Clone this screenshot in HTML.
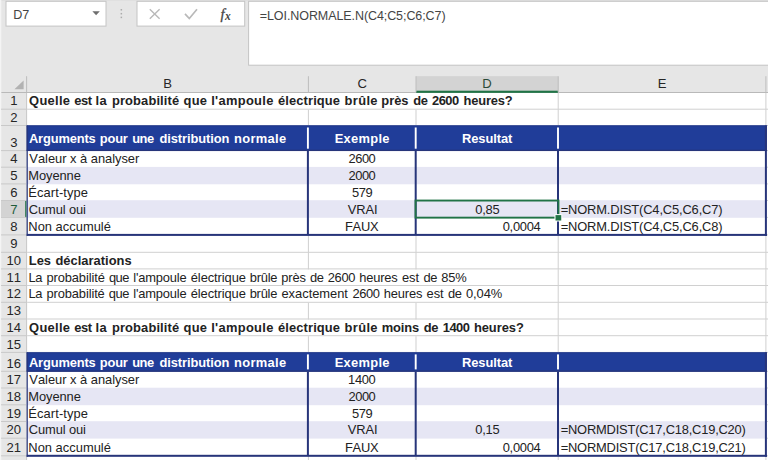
<!DOCTYPE html>
<html><head><meta charset="utf-8"><title>Excel</title>
<style>
html,body{margin:0;padding:0;}
body{font-kerning:none;width:768px;height:460px;position:relative;overflow:hidden;background:#fff;font-family:"Liberation Sans",sans-serif;color:#222;}
svg{position:absolute;left:0;top:0;}
.abs{position:absolute;white-space:nowrap;}
.t{position:absolute;white-space:nowrap;font-size:12.9px;line-height:17px;height:17px;}
.b{font-weight:bold;}
.w{color:#fff;font-weight:bold;}
.rh{position:absolute;left:1px;width:25.6px;text-align:center;font-size:13.1px;color:#262626;line-height:17px;}
.ch{position:absolute;top:76.3px;height:16px;line-height:16px;text-align:center;font-size:13.1px;color:#262626;}
</style></head><body>
<svg width="768" height="460" viewBox="0 0 768 460">
<rect x="0.00" y="0.00" width="768.00" height="92.50" fill="#e6e6e6"/>
<rect x="0.00" y="0.00" width="768.00" height="1.00" fill="#e0e0e0"/>
<rect x="6.00" y="1.30" width="100.00" height="24.80" fill="#fff" stroke="#c4c4c4" stroke-width="1"/>
<path d="M92.4 11.2H99.8L96.1 15.2Z" fill="#6e6e6e"/>
<rect x="120.60" y="9.05" width="1.50" height="1.50" fill="#ababab"/>
<rect x="120.60" y="12.95" width="1.50" height="1.50" fill="#ababab"/>
<rect x="120.60" y="16.65" width="1.50" height="1.50" fill="#ababab"/>
<rect x="137.00" y="1.30" width="107.70" height="24.80" fill="#fff" stroke="#c4c4c4" stroke-width="1"/>
<path d="M149.8 9.2L159.6 18.8M159.6 9.2L149.8 18.8" stroke="#b9b9b9" stroke-width="1.4" fill="none"/>
<path d="M185 13.9L189.3 18.5L197 9.3" stroke="#b9b9b9" stroke-width="1.7" fill="none"/>
<rect x="248.60" y="1.30" width="530.00" height="63.90" fill="#fff" stroke="#c4c4c4" stroke-width="1"/>
<rect x="416.00" y="76.20" width="142.20" height="16.00" fill="#d3d3d3"/>
<rect x="416.00" y="90.70" width="142.20" height="2.20" fill="#217346"/>
<rect x="0.00" y="92.00" width="416.00" height="1.00" fill="#b9b9b9"/>
<rect x="558.20" y="92.00" width="209.80" height="1.00" fill="#b9b9b9"/>
<rect x="26.10" y="76.20" width="1.00" height="16.30" fill="#bdbdbd"/>
<rect x="307.90" y="76.20" width="1.00" height="16.30" fill="#bdbdbd"/>
<rect x="415.50" y="76.20" width="1.00" height="16.30" fill="#bdbdbd"/>
<rect x="557.70" y="76.20" width="1.00" height="16.30" fill="#bdbdbd"/>
<rect x="765.40" y="76.20" width="1.00" height="16.30" fill="#bdbdbd"/>
<path d="M23.6 80.6V89.2H14.4Z" fill="#b2b2b2"/>
<rect x="0.00" y="93.00" width="768.00" height="368.00" fill="#fff"/>
<rect x="0.00" y="93.00" width="26.10" height="368.00" fill="#e6e6e6"/>
<rect x="0.00" y="0.00" width="1.30" height="460.00" fill="#f4f4f4"/>
<rect x="26.10" y="93.00" width="1.00" height="367.00" fill="#c6c6c6"/>
<rect x="1.00" y="201.00" width="25.60" height="15.90" fill="#d3d3d3"/>
<rect x="25.20" y="200.50" width="2.00" height="16.90" fill="#217346"/>
<rect x="1.00" y="108.70" width="25.10" height="1.00" fill="#c9c9c9"/>
<rect x="1.00" y="125.00" width="25.10" height="1.00" fill="#c9c9c9"/>
<rect x="1.00" y="150.10" width="25.10" height="1.00" fill="#c9c9c9"/>
<rect x="1.00" y="166.70" width="25.10" height="1.00" fill="#c9c9c9"/>
<rect x="1.00" y="183.40" width="25.10" height="1.00" fill="#c9c9c9"/>
<rect x="1.00" y="200.00" width="25.10" height="1.00" fill="#c9c9c9"/>
<rect x="1.00" y="216.90" width="25.10" height="1.00" fill="#c9c9c9"/>
<rect x="1.00" y="234.40" width="25.10" height="1.00" fill="#c9c9c9"/>
<rect x="1.00" y="251.80" width="25.10" height="1.00" fill="#c9c9c9"/>
<rect x="1.00" y="268.40" width="25.10" height="1.00" fill="#c9c9c9"/>
<rect x="1.00" y="285.00" width="25.10" height="1.00" fill="#c9c9c9"/>
<rect x="1.00" y="301.80" width="25.10" height="1.00" fill="#c9c9c9"/>
<rect x="1.00" y="318.50" width="25.10" height="1.00" fill="#c9c9c9"/>
<rect x="1.00" y="335.20" width="25.10" height="1.00" fill="#c9c9c9"/>
<rect x="1.00" y="351.90" width="25.10" height="1.00" fill="#c9c9c9"/>
<rect x="1.00" y="370.80" width="25.10" height="1.00" fill="#c9c9c9"/>
<rect x="1.00" y="387.50" width="25.10" height="1.00" fill="#c9c9c9"/>
<rect x="1.00" y="404.30" width="25.10" height="1.00" fill="#c9c9c9"/>
<rect x="1.00" y="421.00" width="25.10" height="1.00" fill="#c9c9c9"/>
<rect x="1.00" y="437.70" width="25.10" height="1.00" fill="#c9c9c9"/>
<rect x="1.00" y="455.30" width="25.10" height="1.00" fill="#c9c9c9"/>
<rect x="27.10" y="108.70" width="740.90" height="1.00" fill="#d0d0d0"/>
<rect x="557.70" y="93.00" width="1.00" height="16.70" fill="#d0d0d0"/>
<rect x="765.40" y="93.00" width="1.00" height="16.70" fill="#d0d0d0"/>
<rect x="27.10" y="125.00" width="740.90" height="1.00" fill="#d0d0d0"/>
<rect x="307.90" y="109.70" width="1.00" height="16.30" fill="#d0d0d0"/>
<rect x="415.50" y="109.70" width="1.00" height="16.30" fill="#d0d0d0"/>
<rect x="557.70" y="109.70" width="1.00" height="16.30" fill="#d0d0d0"/>
<rect x="765.40" y="109.70" width="1.00" height="16.30" fill="#d0d0d0"/>
<rect x="27.10" y="150.10" width="740.90" height="1.00" fill="#d0d0d0"/>
<rect x="307.90" y="126.00" width="1.00" height="25.10" fill="#d0d0d0"/>
<rect x="415.50" y="126.00" width="1.00" height="25.10" fill="#d0d0d0"/>
<rect x="557.70" y="126.00" width="1.00" height="25.10" fill="#d0d0d0"/>
<rect x="765.40" y="126.00" width="1.00" height="25.10" fill="#d0d0d0"/>
<rect x="27.10" y="166.70" width="740.90" height="1.00" fill="#d0d0d0"/>
<rect x="307.90" y="151.10" width="1.00" height="16.60" fill="#d0d0d0"/>
<rect x="415.50" y="151.10" width="1.00" height="16.60" fill="#d0d0d0"/>
<rect x="557.70" y="151.10" width="1.00" height="16.60" fill="#d0d0d0"/>
<rect x="765.40" y="151.10" width="1.00" height="16.60" fill="#d0d0d0"/>
<rect x="27.10" y="183.40" width="740.90" height="1.00" fill="#d0d0d0"/>
<rect x="307.90" y="167.70" width="1.00" height="16.70" fill="#d0d0d0"/>
<rect x="415.50" y="167.70" width="1.00" height="16.70" fill="#d0d0d0"/>
<rect x="557.70" y="167.70" width="1.00" height="16.70" fill="#d0d0d0"/>
<rect x="765.40" y="167.70" width="1.00" height="16.70" fill="#d0d0d0"/>
<rect x="27.10" y="200.00" width="740.90" height="1.00" fill="#d0d0d0"/>
<rect x="307.90" y="184.40" width="1.00" height="16.60" fill="#d0d0d0"/>
<rect x="415.50" y="184.40" width="1.00" height="16.60" fill="#d0d0d0"/>
<rect x="557.70" y="184.40" width="1.00" height="16.60" fill="#d0d0d0"/>
<rect x="765.40" y="184.40" width="1.00" height="16.60" fill="#d0d0d0"/>
<rect x="27.10" y="216.90" width="740.90" height="1.00" fill="#d0d0d0"/>
<rect x="307.90" y="201.00" width="1.00" height="16.90" fill="#d0d0d0"/>
<rect x="415.50" y="201.00" width="1.00" height="16.90" fill="#d0d0d0"/>
<rect x="557.70" y="201.00" width="1.00" height="16.90" fill="#d0d0d0"/>
<rect x="765.40" y="201.00" width="1.00" height="16.90" fill="#d0d0d0"/>
<rect x="27.10" y="234.40" width="740.90" height="1.00" fill="#d0d0d0"/>
<rect x="307.90" y="217.90" width="1.00" height="17.50" fill="#d0d0d0"/>
<rect x="415.50" y="217.90" width="1.00" height="17.50" fill="#d0d0d0"/>
<rect x="557.70" y="217.90" width="1.00" height="17.50" fill="#d0d0d0"/>
<rect x="765.40" y="217.90" width="1.00" height="17.50" fill="#d0d0d0"/>
<rect x="27.10" y="251.80" width="740.90" height="1.00" fill="#d0d0d0"/>
<rect x="307.90" y="235.40" width="1.00" height="17.40" fill="#d0d0d0"/>
<rect x="415.50" y="235.40" width="1.00" height="17.40" fill="#d0d0d0"/>
<rect x="557.70" y="235.40" width="1.00" height="17.40" fill="#d0d0d0"/>
<rect x="765.40" y="235.40" width="1.00" height="17.40" fill="#d0d0d0"/>
<rect x="27.10" y="268.40" width="740.90" height="1.00" fill="#d0d0d0"/>
<rect x="307.90" y="252.80" width="1.00" height="16.60" fill="#d0d0d0"/>
<rect x="415.50" y="252.80" width="1.00" height="16.60" fill="#d0d0d0"/>
<rect x="557.70" y="252.80" width="1.00" height="16.60" fill="#d0d0d0"/>
<rect x="765.40" y="252.80" width="1.00" height="16.60" fill="#d0d0d0"/>
<rect x="27.10" y="285.00" width="740.90" height="1.00" fill="#d0d0d0"/>
<rect x="557.70" y="269.40" width="1.00" height="16.60" fill="#d0d0d0"/>
<rect x="765.40" y="269.40" width="1.00" height="16.60" fill="#d0d0d0"/>
<rect x="27.10" y="301.80" width="740.90" height="1.00" fill="#d0d0d0"/>
<rect x="557.70" y="286.00" width="1.00" height="16.80" fill="#d0d0d0"/>
<rect x="765.40" y="286.00" width="1.00" height="16.80" fill="#d0d0d0"/>
<rect x="27.10" y="318.50" width="740.90" height="1.00" fill="#d0d0d0"/>
<rect x="307.90" y="302.80" width="1.00" height="16.70" fill="#d0d0d0"/>
<rect x="415.50" y="302.80" width="1.00" height="16.70" fill="#d0d0d0"/>
<rect x="557.70" y="302.80" width="1.00" height="16.70" fill="#d0d0d0"/>
<rect x="765.40" y="302.80" width="1.00" height="16.70" fill="#d0d0d0"/>
<rect x="27.10" y="335.20" width="740.90" height="1.00" fill="#d0d0d0"/>
<rect x="557.70" y="319.50" width="1.00" height="16.70" fill="#d0d0d0"/>
<rect x="765.40" y="319.50" width="1.00" height="16.70" fill="#d0d0d0"/>
<rect x="27.10" y="351.90" width="740.90" height="1.00" fill="#d0d0d0"/>
<rect x="307.90" y="336.20" width="1.00" height="16.70" fill="#d0d0d0"/>
<rect x="415.50" y="336.20" width="1.00" height="16.70" fill="#d0d0d0"/>
<rect x="557.70" y="336.20" width="1.00" height="16.70" fill="#d0d0d0"/>
<rect x="765.40" y="336.20" width="1.00" height="16.70" fill="#d0d0d0"/>
<rect x="27.10" y="370.80" width="740.90" height="1.00" fill="#d0d0d0"/>
<rect x="307.90" y="352.90" width="1.00" height="18.90" fill="#d0d0d0"/>
<rect x="415.50" y="352.90" width="1.00" height="18.90" fill="#d0d0d0"/>
<rect x="557.70" y="352.90" width="1.00" height="18.90" fill="#d0d0d0"/>
<rect x="765.40" y="352.90" width="1.00" height="18.90" fill="#d0d0d0"/>
<rect x="27.10" y="387.50" width="740.90" height="1.00" fill="#d0d0d0"/>
<rect x="307.90" y="371.80" width="1.00" height="16.70" fill="#d0d0d0"/>
<rect x="415.50" y="371.80" width="1.00" height="16.70" fill="#d0d0d0"/>
<rect x="557.70" y="371.80" width="1.00" height="16.70" fill="#d0d0d0"/>
<rect x="765.40" y="371.80" width="1.00" height="16.70" fill="#d0d0d0"/>
<rect x="27.10" y="404.30" width="740.90" height="1.00" fill="#d0d0d0"/>
<rect x="307.90" y="388.50" width="1.00" height="16.80" fill="#d0d0d0"/>
<rect x="415.50" y="388.50" width="1.00" height="16.80" fill="#d0d0d0"/>
<rect x="557.70" y="388.50" width="1.00" height="16.80" fill="#d0d0d0"/>
<rect x="765.40" y="388.50" width="1.00" height="16.80" fill="#d0d0d0"/>
<rect x="27.10" y="421.00" width="740.90" height="1.00" fill="#d0d0d0"/>
<rect x="307.90" y="405.30" width="1.00" height="16.70" fill="#d0d0d0"/>
<rect x="415.50" y="405.30" width="1.00" height="16.70" fill="#d0d0d0"/>
<rect x="557.70" y="405.30" width="1.00" height="16.70" fill="#d0d0d0"/>
<rect x="765.40" y="405.30" width="1.00" height="16.70" fill="#d0d0d0"/>
<rect x="27.10" y="437.70" width="740.90" height="1.00" fill="#d0d0d0"/>
<rect x="307.90" y="422.00" width="1.00" height="16.70" fill="#d0d0d0"/>
<rect x="415.50" y="422.00" width="1.00" height="16.70" fill="#d0d0d0"/>
<rect x="557.70" y="422.00" width="1.00" height="16.70" fill="#d0d0d0"/>
<rect x="765.40" y="422.00" width="1.00" height="16.70" fill="#d0d0d0"/>
<rect x="27.10" y="455.30" width="740.90" height="1.00" fill="#d0d0d0"/>
<rect x="307.90" y="438.70" width="1.00" height="17.60" fill="#d0d0d0"/>
<rect x="415.50" y="438.70" width="1.00" height="17.60" fill="#d0d0d0"/>
<rect x="557.70" y="438.70" width="1.00" height="17.60" fill="#d0d0d0"/>
<rect x="765.40" y="438.70" width="1.00" height="17.60" fill="#d0d0d0"/>
<rect x="307.90" y="455.80" width="1.00" height="4.20" fill="#d0d0d0"/>
<rect x="415.50" y="455.80" width="1.00" height="4.20" fill="#d0d0d0"/>
<rect x="557.70" y="455.80" width="1.00" height="4.20" fill="#d0d0d0"/>
<rect x="765.40" y="455.80" width="1.00" height="4.20" fill="#d0d0d0"/>
<rect x="26.70" y="151.00" width="740.20" height="83.90" fill="#fff"/>
<rect x="26.70" y="166.90" width="740.20" height="17.40" fill="#e6e6f4"/>
<rect x="26.70" y="200.20" width="740.20" height="17.60" fill="#e6e6f4"/>
<rect x="26.70" y="125.50" width="740.20" height="25.50" fill="#203d99"/>
<rect x="26.70" y="149.75" width="740.20" height="1.30" fill="#27357a"/>
<rect x="26.70" y="125.40" width="740.20" height="1.00" fill="#22388a"/>
<rect x="306.95" y="127.50" width="1.90" height="21.20" fill="#fff"/>
<rect x="306.90" y="151.00" width="2.00" height="83.90" fill="#27357a"/>
<rect x="414.75" y="127.50" width="1.90" height="21.20" fill="#fff"/>
<rect x="414.70" y="151.00" width="2.00" height="83.90" fill="#27357a"/>
<rect x="557.05" y="127.50" width="1.90" height="21.20" fill="#fff"/>
<rect x="557.00" y="151.00" width="2.00" height="83.90" fill="#27357a"/>
<rect x="764.90" y="125.50" width="2.00" height="110.40" fill="#27357a"/>
<rect x="26.60" y="125.50" width="1.20" height="110.40" fill="#27357a"/>
<rect x="26.70" y="233.90" width="740.20" height="2.00" fill="#27357a"/>
<rect x="26.70" y="371.70" width="740.20" height="84.10" fill="#fff"/>
<rect x="26.70" y="387.70" width="740.20" height="17.50" fill="#e6e6f4"/>
<rect x="26.70" y="421.20" width="740.20" height="17.40" fill="#e6e6f4"/>
<rect x="26.70" y="352.40" width="740.20" height="19.30" fill="#203d99"/>
<rect x="26.70" y="370.45" width="740.20" height="1.30" fill="#27357a"/>
<rect x="26.70" y="352.30" width="740.20" height="1.00" fill="#22388a"/>
<rect x="306.95" y="354.40" width="1.90" height="15.00" fill="#fff"/>
<rect x="306.90" y="371.70" width="2.00" height="84.10" fill="#27357a"/>
<rect x="414.75" y="354.40" width="1.90" height="15.00" fill="#fff"/>
<rect x="414.70" y="371.70" width="2.00" height="84.10" fill="#27357a"/>
<rect x="557.05" y="354.40" width="1.90" height="15.00" fill="#fff"/>
<rect x="557.00" y="371.70" width="2.00" height="84.10" fill="#27357a"/>
<rect x="764.90" y="352.40" width="2.00" height="104.40" fill="#27357a"/>
<rect x="26.60" y="352.40" width="1.20" height="104.40" fill="#27357a"/>
<rect x="26.70" y="454.80" width="740.20" height="2.00" fill="#27357a"/>
<rect x="415.55" y="200.55" width="142.90" height="17.10" fill="none" stroke="#217346" stroke-width="1.9"/>
<rect x="555.00" y="214.60" width="6.80" height="6.40" fill="#217346" stroke="#fff" stroke-width="1"/>
</svg>
<div class="t w" style="left:28.98px;top:130.2px;letter-spacing:-0.155px">Arguments</div>
<div class="t w" style="left:99.85px;top:130.2px;letter-spacing:-0.205px">pour</div>
<div class="t w" style="left:132.20px;top:130.2px;letter-spacing:-0.450px">une</div>
<div class="t w" style="left:159.47px;top:130.2px;letter-spacing:-0.083px">distribution</div>
<div class="t w" style="left:233.95px;top:130.2px;letter-spacing:0.351px">normale</div>
<div class="t w" style="left:334.64px;top:130.2px;letter-spacing:0.307px">Exemple</div>
<div class="t w" style="left:461.94px;top:130.2px;letter-spacing:-0.068px">Resultat</div>
<div class="t" style="left:29.34px;top:150.1px;letter-spacing:-0.020px">Valeur x à analyser</div>
<div class="t" style="left:348.45px;top:150.1px;letter-spacing:-0.448px">2600</div>
<div class="t" style="left:28.34px;top:167.1px;letter-spacing:-0.089px">Moyenne</div>
<div class="t" style="left:348.45px;top:167.1px;letter-spacing:-0.448px">2000</div>
<div class="t" style="left:28.34px;top:184.1px;letter-spacing:0.105px">Écart-type</div>
<div class="t" style="left:351.88px;top:184.1px;letter-spacing:-0.398px">579</div>
<div class="t" style="left:28.74px;top:201.1px;letter-spacing:-0.106px">Cumul oui</div>
<div class="t" style="left:347.84px;top:201.1px;letter-spacing:-0.087px">VRAI</div>
<div class="t" style="left:475.20px;top:201.1px;letter-spacing:-0.221px">0,85</div>
<div class="t" style="left:560.67px;top:201.1px;letter-spacing:-0.145px">=NORM.DIST(C4,C5,C6,C7)</div>
<div class="t" style="left:28.34px;top:218.1px;letter-spacing:0.016px">Non accumulé</div>
<div class="t" style="left:344.94px;top:218.1px;letter-spacing:-0.225px">FAUX</div>
<div class="t" style="left:502.70px;top:218.1px;letter-spacing:-0.275px">0,0004</div>
<div class="t" style="left:560.67px;top:218.1px;letter-spacing:-0.145px">=NORM.DIST(C4,C5,C6,C8)</div>
<div class="t w" style="left:28.98px;top:354.0px;letter-spacing:-0.155px">Arguments</div>
<div class="t w" style="left:99.85px;top:354.0px;letter-spacing:-0.205px">pour</div>
<div class="t w" style="left:132.20px;top:354.0px;letter-spacing:-0.450px">une</div>
<div class="t w" style="left:159.47px;top:354.0px;letter-spacing:-0.083px">distribution</div>
<div class="t w" style="left:233.95px;top:354.0px;letter-spacing:0.351px">normale</div>
<div class="t w" style="left:334.64px;top:354.0px;letter-spacing:0.307px">Exemple</div>
<div class="t w" style="left:461.94px;top:354.0px;letter-spacing:-0.068px">Resultat</div>
<div class="t" style="left:29.34px;top:371.1px;letter-spacing:-0.020px">Valeur x à analyser</div>
<div class="t" style="left:348.12px;top:371.1px;letter-spacing:-0.337px">1400</div>
<div class="t" style="left:28.34px;top:388.1px;letter-spacing:-0.089px">Moyenne</div>
<div class="t" style="left:348.45px;top:388.1px;letter-spacing:-0.448px">2000</div>
<div class="t" style="left:28.34px;top:405.1px;letter-spacing:0.105px">Écart-type</div>
<div class="t" style="left:351.88px;top:405.1px;letter-spacing:-0.398px">579</div>
<div class="t" style="left:28.74px;top:421.1px;letter-spacing:-0.106px">Cumul oui</div>
<div class="t" style="left:347.84px;top:421.1px;letter-spacing:-0.087px">VRAI</div>
<div class="t" style="left:475.20px;top:421.1px;letter-spacing:-0.221px">0,15</div>
<div class="t" style="left:560.67px;top:421.1px;letter-spacing:-0.200px">=NORMDIST(C17,C18,C19,C20)</div>
<div class="t" style="left:28.34px;top:439.1px;letter-spacing:0.016px">Non accumulé</div>
<div class="t" style="left:344.94px;top:439.1px;letter-spacing:-0.225px">FAUX</div>
<div class="t" style="left:502.70px;top:439.1px;letter-spacing:-0.275px">0,0004</div>
<div class="t" style="left:560.67px;top:439.1px;letter-spacing:-0.200px">=NORMDIST(C17,C18,C19,C21)</div>
<div class="t b" style="left:29.07px;top:92.1px;letter-spacing:0.308px">Quelle</div>
<div class="t b" style="left:74.35px;top:92.1px;letter-spacing:-0.450px">est</div>
<div class="t b" style="left:95.50px;top:92.1px;letter-spacing:0.450px">la</div>
<div class="t b" style="left:111.95px;top:92.1px;letter-spacing:0.126px">probabilité</div>
<div class="t b" style="left:183.47px;top:92.1px;letter-spacing:0.318px">que</div>
<div class="t b" style="left:211.20px;top:92.1px;letter-spacing:0.318px">l'ampoule</div>
<div class="t b" style="left:278.00px;top:92.1px;letter-spacing:0.123px">électrique</div>
<div class="t b" style="left:344.55px;top:92.1px;letter-spacing:0.363px">brûle</div>
<div class="t b" style="left:381.25px;top:92.1px;letter-spacing:0.010px">près</div>
<div class="t b" style="left:413.30px;top:92.1px;letter-spacing:-0.450px">de</div>
<div class="t b" style="left:431.92px;top:92.1px;letter-spacing:-0.450px">2600</div>
<div class="t b" style="left:463.50px;top:92.1px;letter-spacing:-0.173px">heures?</div>
<div class="t b" style="left:29.07px;top:319.1px;letter-spacing:0.308px">Quelle</div>
<div class="t b" style="left:74.35px;top:319.1px;letter-spacing:-0.450px">est</div>
<div class="t b" style="left:95.50px;top:319.1px;letter-spacing:0.450px">la</div>
<div class="t b" style="left:111.95px;top:319.1px;letter-spacing:0.126px">probabilité</div>
<div class="t b" style="left:183.47px;top:319.1px;letter-spacing:0.318px">que</div>
<div class="t b" style="left:211.20px;top:319.1px;letter-spacing:0.318px">l'ampoule</div>
<div class="t b" style="left:278.00px;top:319.1px;letter-spacing:0.123px">électrique</div>
<div class="t b" style="left:344.55px;top:319.1px;letter-spacing:0.363px">brûle</div>
<div class="t b" style="left:381.75px;top:319.1px;letter-spacing:-0.127px">moins</div>
<div class="t b" style="left:423.80px;top:319.1px;letter-spacing:-0.450px">de</div>
<div class="t b" style="left:442.68px;top:319.1px;letter-spacing:-0.450px">1400</div>
<div class="t b" style="left:473.90px;top:319.1px;letter-spacing:-0.040px">heures?</div>
<div class="t b" style="left:28.74px;top:252.1px;letter-spacing:0.032px">Les</div>
<div class="t b" style="left:55.47px;top:252.1px;letter-spacing:0.024px">déclarations</div>
<div class="t" style="left:28.44px;top:269.1px;letter-spacing:-0.450px">La</div>
<div class="t" style="left:46.43px;top:269.1px;letter-spacing:-0.109px">probabilité</div>
<div class="t" style="left:108.88px;top:269.1px;letter-spacing:-0.436px">que</div>
<div class="t" style="left:133.22px;top:269.1px;letter-spacing:-0.159px">l'ampoule</div>
<div class="t" style="left:190.77px;top:269.1px;letter-spacing:-0.083px">électrique</div>
<div class="t" style="left:249.68px;top:269.1px;letter-spacing:-0.209px">brûle</div>
<div class="t" style="left:281.26px;top:269.1px;letter-spacing:-0.105px">près</div>
<div class="t" style="left:310.08px;top:269.1px;letter-spacing:-0.450px">de</div>
<div class="t" style="left:327.81px;top:269.1px;letter-spacing:-0.367px">2600</div>
<div class="t" style="left:359.14px;top:269.1px;letter-spacing:-0.157px">heures</div>
<div class="t" style="left:401.92px;top:269.1px;letter-spacing:0.005px">est</div>
<div class="t" style="left:423.55px;top:269.1px;letter-spacing:-0.450px">de</div>
<div class="t" style="left:441.37px;top:269.1px;letter-spacing:-0.164px">85%</div>
<div class="t" style="left:28.44px;top:285.1px;letter-spacing:-0.450px">La</div>
<div class="t" style="left:46.42px;top:285.1px;letter-spacing:-0.110px">probabilité</div>
<div class="t" style="left:108.86px;top:285.1px;letter-spacing:-0.439px">que</div>
<div class="t" style="left:133.19px;top:285.1px;letter-spacing:-0.161px">l'ampoule</div>
<div class="t" style="left:190.73px;top:285.1px;letter-spacing:-0.084px">électrique</div>
<div class="t" style="left:249.63px;top:285.1px;letter-spacing:-0.211px">brûle</div>
<div class="t" style="left:281.48px;top:285.1px;letter-spacing:-0.017px">exactement</div>
<div class="t" style="left:352.40px;top:285.1px;letter-spacing:-0.370px">2600</div>
<div class="t" style="left:383.72px;top:285.1px;letter-spacing:-0.159px">heures</div>
<div class="t" style="left:426.48px;top:285.1px">est</div>
<div class="t" style="left:448.11px;top:285.1px;letter-spacing:-0.450px">de</div>
<div class="t" style="left:465.98px;top:285.1px;letter-spacing:-0.075px">0,04%</div>
<div class="ch" style="left:26.6px;width:281.8px">B</div>
<div class="ch" style="left:308.4px;width:107.6px">C</div>
<div class="ch" style="left:416.0px;width:142.2px;color:#2a4a38">D</div>
<div class="ch" style="left:558.2px;width:207.7px">E</div>
<div class="rh" style="top:92.1px">1</div>
<div class="rh" style="top:109.1px">2</div>
<div class="rh" style="top:134.1px">3</div>
<div class="rh" style="top:150.1px">4</div>
<div class="rh" style="top:167.1px">5</div>
<div class="rh" style="top:184.1px">6</div>
<div class="rh" style="top:201.1px;color:#1e5c3a">7</div>
<div class="rh" style="top:218.1px">8</div>
<div class="rh" style="top:235.1px">9</div>
<div class="rh" style="top:252.1px">10</div>
<div class="rh" style="top:269.1px">11</div>
<div class="rh" style="top:285.1px">12</div>
<div class="rh" style="top:302.1px">13</div>
<div class="rh" style="top:319.1px">14</div>
<div class="rh" style="top:336.1px">15</div>
<div class="rh" style="top:355.1px">16</div>
<div class="rh" style="top:371.1px">17</div>
<div class="rh" style="top:388.1px">18</div>
<div class="rh" style="top:405.1px">19</div>
<div class="rh" style="top:421.1px">20</div>
<div class="rh" style="top:439.1px">21</div>
<div class="abs" style="left:13.2px;top:7.3px;font-size:12.6px;line-height:16px;color:#444">D7</div>
<div class="abs" style="left:220.4px;top:5.8px;font-family:'Liberation Serif',serif;font-style:italic;font-size:14.5px;line-height:16px;color:#444;-webkit-text-stroke:0.3px #444">f<span style="font-size:11.5px;font-weight:bold;margin-left:0.6px;position:relative;top:0.8px;-webkit-text-stroke:0">x</span></div>
<div class="t" style="left:259.79px;top:7.8px;letter-spacing:-0.081px;font-size:12.5px;color:#444">=LOI.NORMALE.N(C4;C5;C6;C7)</div>
</body></html>
